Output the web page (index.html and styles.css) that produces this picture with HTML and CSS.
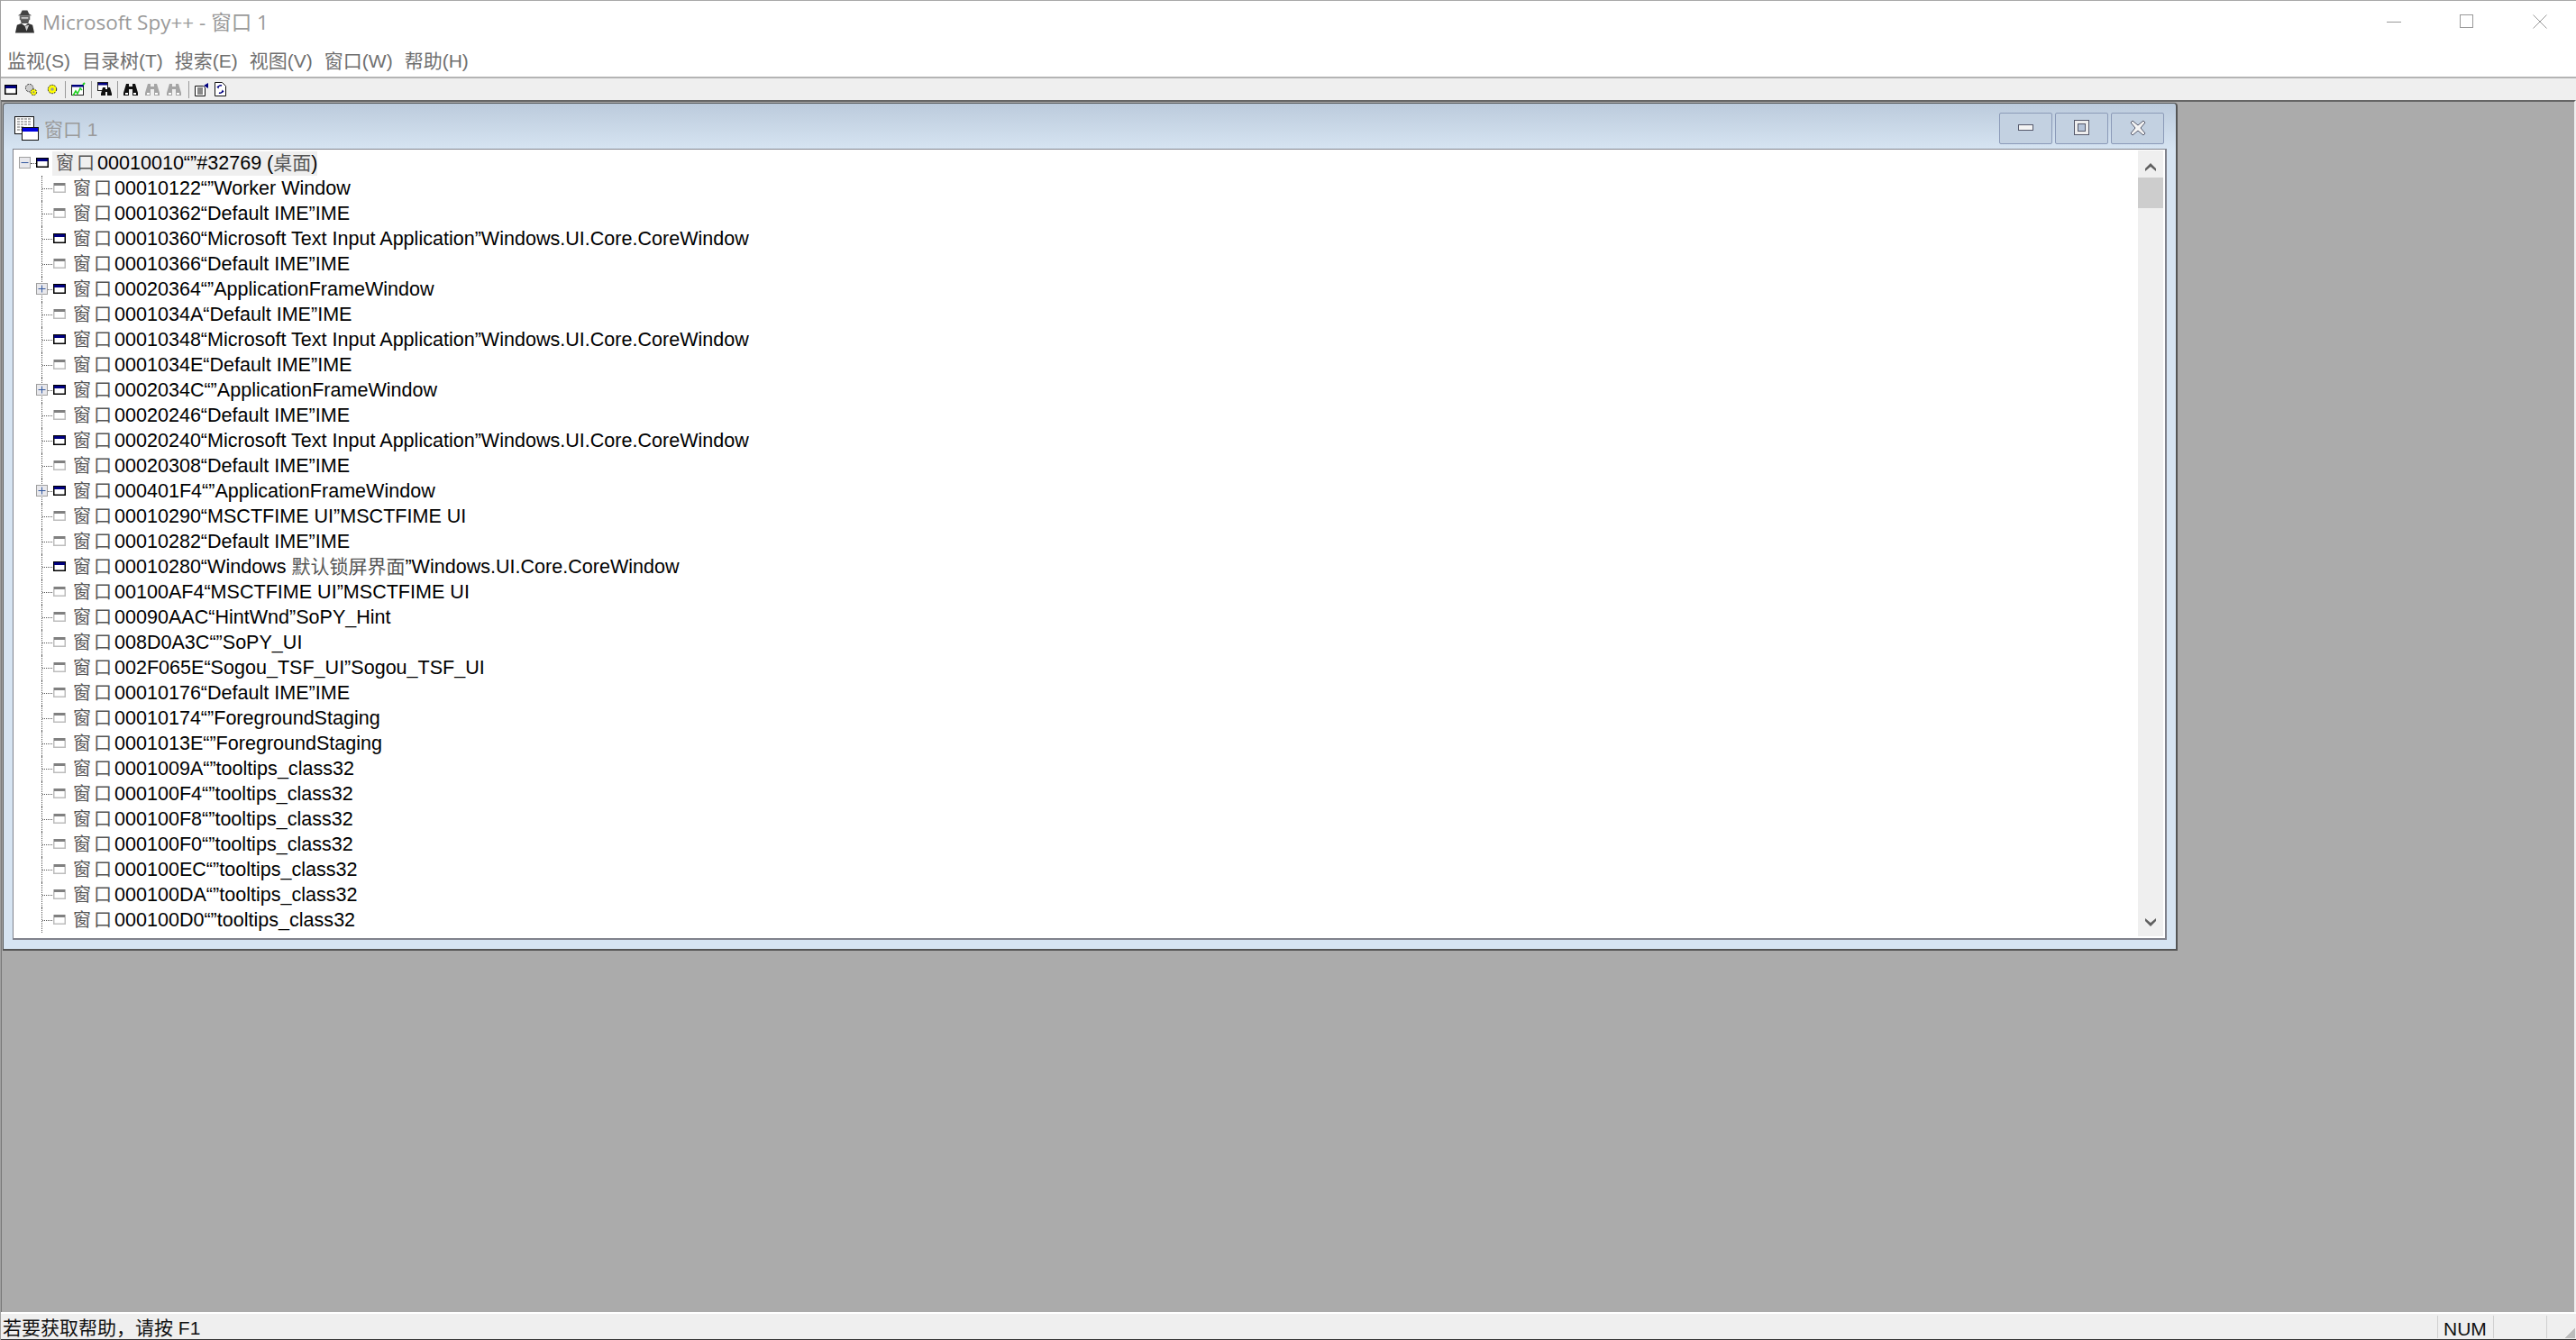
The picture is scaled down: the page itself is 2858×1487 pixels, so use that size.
FILE: index.html
```html
<!DOCTYPE html>
<html lang="zh">
<head>
<meta charset="utf-8">
<title>Microsoft Spy++ - 窗口 1</title>
<link rel="stylesheet" href="styles.css">
</head>
<body>
<svg class="defs" width="0" height="0" aria-hidden="true">
  <symbol id="w-dark" viewBox="0 0 14 11"><rect x=".75" y=".75" width="12.5" height="9.5" fill="#fff" stroke="#000" stroke-width="1.5"/><rect x="1" y="1" width="12" height="3" fill="#00007f"/></symbol>
  <symbol id="w-grey" viewBox="0 0 14 11"><rect x=".75" y=".75" width="12.5" height="9.5" fill="#fff" stroke="#bdbdbd" stroke-width="1.5"/><rect x="1" y="0" width="12" height="3" fill="#808080"/></symbol>
  <symbol id="exp" viewBox="0 0 13 13"><rect x=".5" y=".5" width="12" height="12" fill="#e8e8ec" stroke="#a0a0a0"/><path d="M2.5 6.5h8" stroke="#33589e"/></symbol>
  <symbol id="exp-p" viewBox="0 0 13 13"><rect x=".5" y=".5" width="12" height="12" fill="#e8e8ec" stroke="#a0a0a0"/><path d="M2.5 6.5h8M6.5 2.5v8" stroke="#33589e"/></symbol>
  <symbol id="bino" viewBox="0 0 16 15"><path d="M3 1h3v3h4V1h3l3 10v3H10V7H6v7H0v-3z" fill="currentColor"/><path d="M2 11h3v2H2zM11 11h3v2h-3z" fill="#fff"/></symbol>
</svg>
<div class="app">
  <header class="titlebar">
    <svg class="spy" viewBox="0 0 24 28"><path d="M7 5 9 1h6l2 4 3 2H4z" fill="#444"/><rect x="6" y="7" width="12" height="5" fill="#666"/><rect x="8" y="9" width="8" height="1.5" fill="#ddd"/><path d="M7 12h10l-1 4H8z" fill="#555"/><path d="M1 27 3 18l5-2 4 3 4-3 5 2 2 9z" fill="#333"/><path d="M12 19l5-1-3 7z" fill="#ccc"/></svg>
    <span class="apptitle">Microsoft Spy++ - 窗口 1</span>
    <div class="winctl">
      <svg class="ctl" viewBox="0 0 16 16"><path d="M0 8.5h16" stroke="#999"/></svg>
      <svg class="ctl" viewBox="0 0 16 16"><rect x=".5" y=".5" width="14" height="14" fill="none" stroke="#999"/></svg>
      <svg class="ctl" viewBox="0 0 16 16"><path d="M.5.5l15 15M15.5.5l-15 15" stroke="#999"/></svg>
    </div>
  </header>
  <nav class="menubar">
    <span class="mi">监视(S)</span><span class="mi">目录树(T)</span><span class="mi">搜索(E)</span><span class="mi">视图(V)</span><span class="mi">窗口(W)</span><span class="mi">帮助(H)</span>
  </nav>
  <div class="toolbar">
    <svg class="tb w14"><use href="#w-dark"/></svg>
    <svg class="tb gear" viewBox="0 0 16 16"><circle cx="6" cy="6" r="4.5" fill="#ccc" stroke="#222" stroke-dasharray="2 1"/><circle cx="11" cy="11" r="3.5" fill="#ff0" stroke="#222" stroke-dasharray="2 1"/><circle cx="11" cy="11" r="1.2" fill="#888"/></svg>
    <svg class="tb gear2" viewBox="0 0 12 12"><circle cx="6" cy="6" r="4.7" fill="#ff0" stroke="#222" stroke-dasharray="2 1"/><circle cx="6" cy="6" r="1.8" fill="#999"/></svg>
    <i class="sep"></i>
    <svg class="tb w16" viewBox="0 0 16 16"><rect x=".5" y="3.5" width="13" height="11" fill="#fff" stroke="#222"/><rect x="1" y="3" width="13" height="2.5" fill="#00007f"/><path d="M2 15l3-5 2 3 3-6 2 2" fill="none" stroke="#1bd11b" stroke-width="1.5"/><path d="M13 3l2-2" stroke="#1bd11b" stroke-width="2"/></svg>
    <i class="sep"></i>
    <svg class="tb w16" viewBox="0 0 16 16"><rect x=".5" y=".5" width="11" height="9" fill="#fff" stroke="#222"/><rect x="1" y="1" width="10" height="2.5" fill="#00007f"/><path d="M6 6h3v2h2V6h3l2 7v2h-5v-4H9v4H4v-2z" fill="#111"/></svg>
    <i class="sep"></i>
    <svg class="tb bino"><use href="#bino"/></svg>
    <svg class="tb bino off"><use href="#bino"/></svg>
    <svg class="tb bino off"><use href="#bino"/></svg>
    <i class="sep"></i>
    <svg class="tb w16" viewBox="0 0 16 16"><path d="M.5 4.5h9l2 2v9H.5z" fill="#fff" stroke="#111"/><path d="M3 7h6M3 9h6M3 11h6M3 13h6" stroke="#111"/><path d="M10 4l5-3v6z" fill="#00007f"/></svg>
    <svg class="tb w13" viewBox="0 0 13 16"><path d="M.5.5h8l4 4v11H.5z" fill="#fff" stroke="#111"/><path d="M8 4a3 3 0 0 0-4 2l-1-1M5 12a3 3 0 0 0 4-2l1 1" fill="none" stroke="#00007f" stroke-width="1.5"/></svg>
  </div>
  <main class="mdi">
    <section class="child">
      <div class="childhead">
        <svg class="childicon" viewBox="0 0 27 27"><rect x=".5" y=".5" width="21" height="19" fill="#fff" stroke="#111"/><path d="M3 3h16M3 6h16M3 9h16M3 12h7M3 15h7" stroke="#666" stroke-dasharray="3 1"/><rect x="8.5" y="12.5" width="18" height="14" fill="#fff" stroke="#111"/><rect x="9" y="13" width="17" height="4" fill="#0000e0"/></svg>
        <span class="childtitle">窗口 1</span>
        <div class="mdictl">
          <button class="mb"><svg viewBox="0 0 18 10"><rect x=".5" y="1.5" width="16" height="6" fill="#f4f4f4" stroke="#55586a"/></svg></button>
          <button class="mb"><svg viewBox="0 0 18 18"><rect x=".5" y=".5" width="16" height="16" fill="#eee" stroke="#55586a"/><rect x="4.5" y="4.5" width="8" height="8" fill="#b5c3d8" stroke="#55586a"/></svg></button>
          <button class="mb"><svg viewBox="0 0 18 18"><path d="M1 3l2-2 6 5 6-5 2 2-5 6 5 6-2 2-6-5-6 5-2-2 5-6z" fill="#f4f4f4" stroke="#55586a"/></svg></button>
        </div>
      </div>
      <div class="treebox">
        <div class="tree">
          <div class="row root"><span class="gut"><svg class="exp"><use href="#exp"/></svg></span><svg class="ico"><use href="#w-dark"/></svg><span class="lbl sel"><span class="cjk">窗口</span>00010010“”#32769 (<span class="cjk2">桌面</span>)</span></div>
          <div class="row"><span class="gut"></span><svg class="ico"><use href="#w-grey"/></svg><span class="lbl"><span class="cjk">窗口</span>00010122“”Worker Window</span></div>
          <div class="row"><span class="gut"></span><svg class="ico"><use href="#w-grey"/></svg><span class="lbl"><span class="cjk">窗口</span>00010362“Default IME”IME</span></div>
          <div class="row"><span class="gut"></span><svg class="ico"><use href="#w-dark"/></svg><span class="lbl"><span class="cjk">窗口</span>00010360“Microsoft Text Input Application”Windows.UI.Core.CoreWindow</span></div>
          <div class="row"><span class="gut"></span><svg class="ico"><use href="#w-grey"/></svg><span class="lbl"><span class="cjk">窗口</span>00010366“Default IME”IME</span></div>
          <div class="row"><span class="gut has"><svg class="exp"><use href="#exp-p"/></svg></span><svg class="ico"><use href="#w-dark"/></svg><span class="lbl"><span class="cjk">窗口</span>00020364“”ApplicationFrameWindow</span></div>
          <div class="row"><span class="gut"></span><svg class="ico"><use href="#w-grey"/></svg><span class="lbl"><span class="cjk">窗口</span>0001034A“Default IME”IME</span></div>
          <div class="row"><span class="gut"></span><svg class="ico"><use href="#w-dark"/></svg><span class="lbl"><span class="cjk">窗口</span>00010348“Microsoft Text Input Application”Windows.UI.Core.CoreWindow</span></div>
          <div class="row"><span class="gut"></span><svg class="ico"><use href="#w-grey"/></svg><span class="lbl"><span class="cjk">窗口</span>0001034E“Default IME”IME</span></div>
          <div class="row"><span class="gut has"><svg class="exp"><use href="#exp-p"/></svg></span><svg class="ico"><use href="#w-dark"/></svg><span class="lbl"><span class="cjk">窗口</span>0002034C“”ApplicationFrameWindow</span></div>
          <div class="row"><span class="gut"></span><svg class="ico"><use href="#w-grey"/></svg><span class="lbl"><span class="cjk">窗口</span>00020246“Default IME”IME</span></div>
          <div class="row"><span class="gut"></span><svg class="ico"><use href="#w-dark"/></svg><span class="lbl"><span class="cjk">窗口</span>00020240“Microsoft Text Input Application”Windows.UI.Core.CoreWindow</span></div>
          <div class="row"><span class="gut"></span><svg class="ico"><use href="#w-grey"/></svg><span class="lbl"><span class="cjk">窗口</span>00020308“Default IME”IME</span></div>
          <div class="row"><span class="gut has"><svg class="exp"><use href="#exp-p"/></svg></span><svg class="ico"><use href="#w-dark"/></svg><span class="lbl"><span class="cjk">窗口</span>000401F4“”ApplicationFrameWindow</span></div>
          <div class="row"><span class="gut"></span><svg class="ico"><use href="#w-grey"/></svg><span class="lbl"><span class="cjk">窗口</span>00010290“MSCTFIME UI”MSCTFIME UI</span></div>
          <div class="row"><span class="gut"></span><svg class="ico"><use href="#w-grey"/></svg><span class="lbl"><span class="cjk">窗口</span>00010282“Default IME”IME</span></div>
          <div class="row"><span class="gut"></span><svg class="ico"><use href="#w-dark"/></svg><span class="lbl"><span class="cjk">窗口</span>00010280“Windows <span class="cjk2">默认锁屏界面</span>”Windows.UI.Core.CoreWindow</span></div>
          <div class="row"><span class="gut"></span><svg class="ico"><use href="#w-grey"/></svg><span class="lbl"><span class="cjk">窗口</span>00100AF4“MSCTFIME UI”MSCTFIME UI</span></div>
          <div class="row"><span class="gut"></span><svg class="ico"><use href="#w-grey"/></svg><span class="lbl"><span class="cjk">窗口</span>00090AAC“HintWnd”SoPY_Hint</span></div>
          <div class="row"><span class="gut"></span><svg class="ico"><use href="#w-grey"/></svg><span class="lbl"><span class="cjk">窗口</span>008D0A3C“”SoPY_UI</span></div>
          <div class="row"><span class="gut"></span><svg class="ico"><use href="#w-grey"/></svg><span class="lbl"><span class="cjk">窗口</span>002F065E“Sogou_TSF_UI”Sogou_TSF_UI</span></div>
          <div class="row"><span class="gut"></span><svg class="ico"><use href="#w-grey"/></svg><span class="lbl"><span class="cjk">窗口</span>00010176“Default IME”IME</span></div>
          <div class="row"><span class="gut"></span><svg class="ico"><use href="#w-grey"/></svg><span class="lbl"><span class="cjk">窗口</span>00010174“”ForegroundStaging</span></div>
          <div class="row"><span class="gut"></span><svg class="ico"><use href="#w-grey"/></svg><span class="lbl"><span class="cjk">窗口</span>0001013E“”ForegroundStaging</span></div>
          <div class="row"><span class="gut"></span><svg class="ico"><use href="#w-grey"/></svg><span class="lbl"><span class="cjk">窗口</span>0001009A“”tooltips_class32</span></div>
          <div class="row"><span class="gut"></span><svg class="ico"><use href="#w-grey"/></svg><span class="lbl"><span class="cjk">窗口</span>000100F4“”tooltips_class32</span></div>
          <div class="row"><span class="gut"></span><svg class="ico"><use href="#w-grey"/></svg><span class="lbl"><span class="cjk">窗口</span>000100F8“”tooltips_class32</span></div>
          <div class="row"><span class="gut"></span><svg class="ico"><use href="#w-grey"/></svg><span class="lbl"><span class="cjk">窗口</span>000100F0“”tooltips_class32</span></div>
          <div class="row"><span class="gut"></span><svg class="ico"><use href="#w-grey"/></svg><span class="lbl"><span class="cjk">窗口</span>000100EC“”tooltips_class32</span></div>
          <div class="row"><span class="gut"></span><svg class="ico"><use href="#w-grey"/></svg><span class="lbl"><span class="cjk">窗口</span>000100DA“”tooltips_class32</span></div>
          <div class="row"><span class="gut"></span><svg class="ico"><use href="#w-grey"/></svg><span class="lbl"><span class="cjk">窗口</span>000100D0“”tooltips_class32</span></div>
        </div>
        <div class="sbar">
          <svg class="arrow" viewBox="0 0 12 9"><path d="M0 6l6-6 6 6v3L6 4 0 9z" fill="#606060"/></svg>
          <div class="thumb"></div>
          <svg class="arrow dn" viewBox="0 0 12 9"><path d="M0 0l6 5 6-5v3L6 9 0 3z" fill="#606060"/></svg>
        </div>
      </div>
    </section>
  </main>
  <footer class="status">
    <span class="msg">若要获取帮助，请按 F1</span>
    <span class="pane num">NUM</span>
    <span class="pane blank"></span>
    <span class="grip"></span>
  </footer>
</div>
</body>
</html>
```
FILE: styles.css
```css
*{box-sizing:border-box}
html,body{margin:0;height:100%;overflow:hidden}
body{font-family:"Liberation Sans","Noto Sans CJK SC",sans-serif;font-size:21px;background:#fff;color:#000}
.defs{position:absolute}
.app{height:1487px;display:flex;flex-direction:column;border-left:1px solid #a0a0a0}
.titlebar{height:46px;flex:none;display:flex;align-items:center;padding-left:15px;border-top:1px solid #a8a8a8;background:#fff}
.spy{width:23px;height:28px;margin-right:8px}
.apptitle{color:#9a9a9a;font-size:22.5px;line-height:28px;padding-top:3px;font-family:"Open Sans","Noto Sans CJK SC",sans-serif}
.winctl{margin-left:auto;display:flex;gap:65px;padding-right:32px}
.ctl{width:16px;height:16px}
.menubar{height:41px;flex:none;display:flex;align-items:center;gap:13px;padding:5px 0 0 7px;border-bottom:2px solid #b4b4b4;color:#6f6f6f;background:#fff;line-height:28px}
.toolbar{height:24px;flex:none;display:flex;align-items:center;padding-left:4px;background:#efefef}
.tb{flex:none;display:block}
.w14{width:14px;height:11px;margin-right:8px}
.gear{width:15px;height:15px;margin-right:10px}
.gear2{width:12px;height:12px;margin-right:8px}
.w16{width:16px;height:16px;margin-right:6px}
.w13{width:13px;height:16px}
.bino{width:16px;height:15px;margin-right:8px;color:#111}
.bino.off{color:#a5a5a5}
.sep{width:1px;height:19px;background:#9a9a9a;margin-right:6px;flex:none}
.mdi{flex:1;min-height:0;background:#ababab;border-top:2px solid #666;border-left:1px solid #777;border-right:2px solid #efefef;padding:1px 0 0 1px}
.child{width:2413px;height:941px;display:flex;flex-direction:column;border:solid #555;border-width:1px 2px 2px 1px;border-radius:4px 4px 0 0;background:linear-gradient(#bccbdc 0,#d6e4f2 51px);padding:0 10px 10px 10px}
.childhead{height:50px;flex:none;display:flex;align-items:center;padding:4px 0 0 2px}
.childicon{width:27px;height:27px;margin-right:6px}
.childtitle{color:#9a9a9a;font-size:21px}
.mdictl{margin-left:auto;display:flex;gap:3px;padding-right:3px}
.mb{width:59px;height:35px;padding:0;display:flex;align-items:center;justify-content:center;background:#c3d1e1;border:1px solid #8b9ab8;border-radius:2px}
.mb svg{width:18px;height:18px}
.treebox{flex:1;min-height:0;display:flex;border:solid #80828c;border-width:1px 2px 2px 1px;background:#fff;padding:1px 2px 2px 0;overflow:hidden}
.tree{flex:1;min-width:0;background:#fff}
.row{height:28px;display:flex;align-items:center;white-space:nowrap;font-size:21.55px}
.gut{position:relative;width:44px;height:100%;flex:none}
.gut::before{content:"";position:absolute;left:31px;top:0;bottom:0;border-left:1px dotted #555}
.gut::after{content:"";position:absolute;left:32px;width:11px;top:50%;border-top:1px dotted #555}
.root .gut{width:25px}
.root .gut::before{display:none}
.root .gut::after{left:19px;width:6px}
.gut.has::after{left:38px;width:5px}
.exp{position:absolute;left:6px;top:7px;width:13px;height:13px;z-index:1}
.has .exp{left:25px}
.ico{width:14px;height:11px;flex:none;margin-right:4px;position:relative;top:-1px}
.lbl{display:block;height:27px;line-height:26px;padding:0 0 0 4px}
.lbl.sel{background:#efefef}
.cjk{font-family:"Noto Sans CJK SC",sans-serif;font-size:20px;letter-spacing:3px;line-height:1;color:#555;display:inline-block;width:46px}
.cjk2{font-family:"Noto Sans CJK SC",sans-serif;color:#555;font-size:21px;line-height:1}
.sbar{width:28px;flex:none;background:#efefef;display:flex;flex-direction:column;align-items:center}
.arrow{width:12px;height:9px;margin-top:14px;flex:none}
.arrow.dn{margin-top:auto;margin-bottom:11px}
.thumb{width:100%;height:34px;margin-top:7px;background:#cdcdcd}
.status{height:31px;flex:none;display:flex;align-items:center;background:#efefef;border-top:2px solid #fff;border-bottom:1px solid #333;position:relative}
.msg{flex:1;padding:4px 0 0 2px;font-size:21px;line-height:26px;color:#111}
.pane{height:25px;border-left:1px solid #d0d0d0;display:flex;align-items:center}
.num{width:62px;padding:5px 0 0 6px;font-size:21px;color:#111}
.blank{width:59px}
.grip{width:33px;height:25px;border-left:1px solid #d0d0d0;position:relative}
.grip::after{content:"";position:absolute;right:1px;bottom:0;width:12px;height:12px;background:linear-gradient(135deg,transparent 50%,#bcbcbc 50%)}
```
